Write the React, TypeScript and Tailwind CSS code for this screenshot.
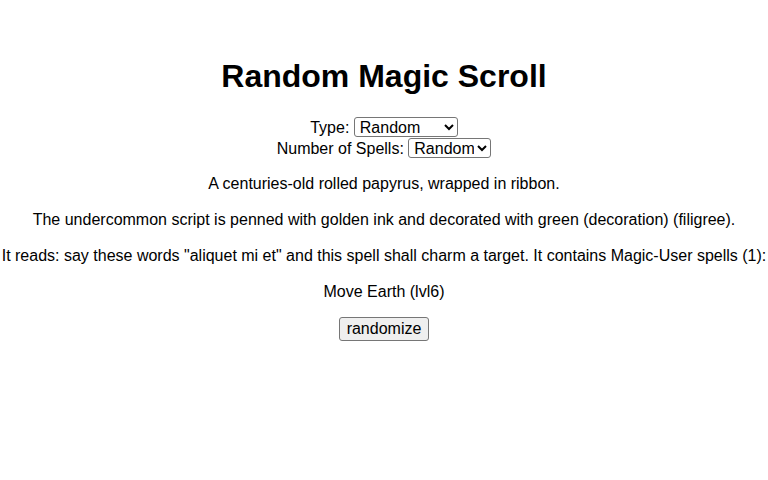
import React, { useState } from 'react';

const scrollTypes = ['Random', 'Spell Scroll', 'Protection', 'Cursed'];
const spellCounts = ['Random', '1', '2', '3', '4', '5', '6', '7'];

const App: React.FC = () => {
  const [type, setType] = useState('Random');
  const [count, setCount] = useState('Random');

  return (
    <div className="min-h-screen bg-white text-black text-center text-[16px] pt-[58px]" style={{ fontFamily: '"Liberation Sans", Arial, sans-serif' }}>
      <h1 className="text-[32px] leading-[37px] font-bold">Random Magic Scroll</h1>

      <div className="mt-[21.5px] leading-[21px]">
        <div className="h-[21px] flex items-center justify-center">
          <span>Type:&nbsp;</span>
          <select
            value={type}
            onChange={(e) => setType(e.target.value)}
            className="w-[104px] h-[20px] border border-[#767676] rounded-[3px] bg-white text-[16px] leading-[18px] pl-[1px]"
          >
            {scrollTypes.map((t) => (
              <option key={t}>{t}</option>
            ))}
          </select>
        </div>
        <div className="h-[21px] flex items-center justify-center">
          <span>Number of Spells:&nbsp;</span>
          <select
            value={count}
            onChange={(e) => setCount(e.target.value)}
            className="w-[83px] h-[20px] border border-[#767676] rounded-[3px] bg-white text-[16px] leading-[18px] pl-[1px]"
          >
            {spellCounts.map((c) => (
              <option key={c}>{c}</option>
            ))}
          </select>
        </div>
      </div>

      <div className="mt-[15.5px] flex flex-col gap-4 leading-[20px]">
        <p>A centuries-old rolled papyrus, wrapped in ribbon.</p>
        <p>The undercommon script is penned with golden ink and decorated with green (decoration) (filigree).</p>
        <p>It reads: say these words "aliquet mi et" and this spell shall charm a target. It contains Magic-User spells (1):</p>
        <p>Move Earth (lvl6)</p>
      </div>

      <button className="mt-[15px] h-[24px] px-[7px] border border-[#767676] rounded-[3px] bg-[#efefef] leading-[20px]">
        randomize
      </button>
    </div>
  );
};

export default App;
